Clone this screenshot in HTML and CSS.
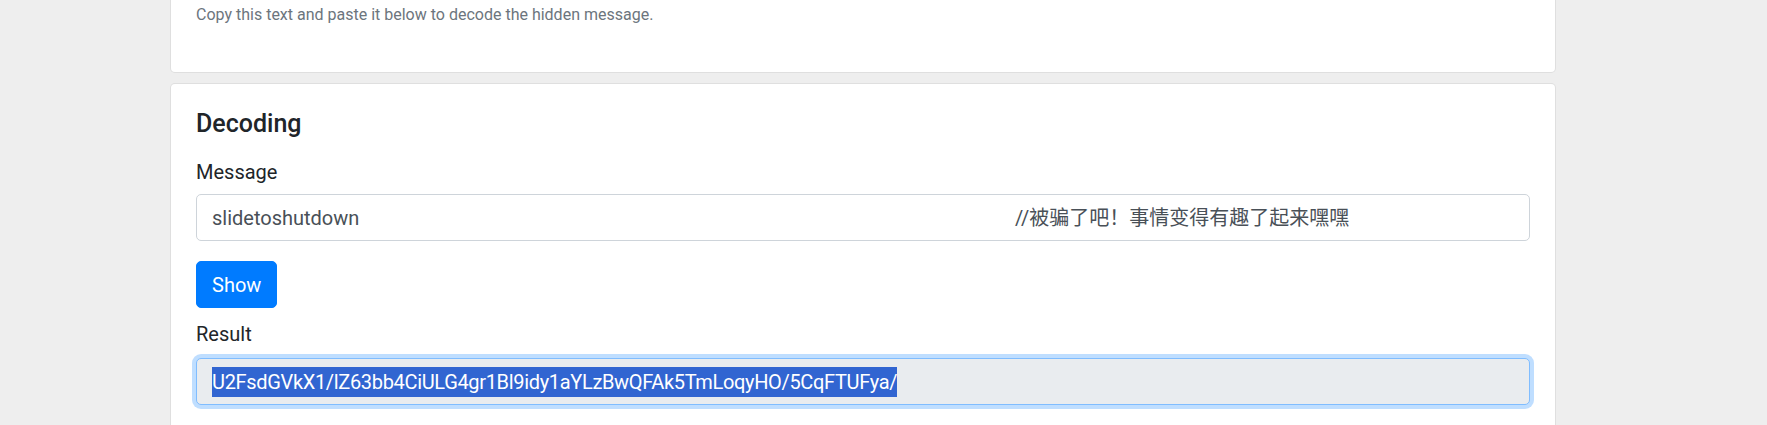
FILE: index.html
```html
<!DOCTYPE html>
<html lang="en">
<head>
<meta charset="UTF-8">
<meta name="viewport" content="width=device-width, initial-scale=1">
<title>Decoding</title>
<link rel="stylesheet" href="styles.css">
</head>
<body>
<div class="page">
    <div class="card card-encode">
        <div class="card-body">
            <div class="form-group">
                <small class="help">Copy this text and paste it below to decode the hidden message.</small>
            </div>
        </div>
    </div>
    <div class="card card-decode">
        <div class="card-body">
            <h5 class="card-title">Decoding</h5>
            <div class="form-group">
                <label class="label-message">Message</label>
                <div class="form-control"><span class="msg-word">slidetoshutdown</span><span class="msg-note">//被骗了吧！事情变得有趣了起来嘿嘿</span></div>
            </div>
            <button class="btn">Show</button>
            <div class="form-group">
                <label class="label-result">Result</label>
                <div class="form-control result"><span class="selected">U2FsdGVkX1/lZ63bb4CiULG4gr1Bl9idy1aYLzBwQFAk5TmLoqyHO/5CqFTUFya/</span></div>
            </div>
        </div>
    </div>
</div>
</body>
</html>
```

FILE: styles.css
```css
* { margin: 0; padding: 0; box-sizing: border-box; }
body {
    background: #eee;
    color: #212529;
    font-family: "Segoe UI", Roboto, "Noto Sans", "Noto Sans CJK SC", sans-serif;
    font-size: 20px;
    line-height: 30px;
}
.page {
    width: 1386px;
    margin-left: 170px;
}
.card {
    background: #fff;
    border: 1px solid rgba(0,0,0,.125);
    border-radius: 5px;
}
.card-encode { margin-top: -23px; }
.card-decode { margin-top: 10px; min-height: 400px; }
.card-body { padding: 25px; }
.form-group { margin-bottom: 20px; }
.help {
    display: block;
    font-size: 16px;
    line-height: 24px;
    color: #6c757d;
}
.card-title {
    font-size: 25px;
    font-weight: 500;
    line-height: 30px;
    margin-bottom: 18px;
}
label { display: block; }
.label-message { margin-bottom: 7px; }
.label-result { margin-bottom: 9px; }
.form-control {
    display: flex;
    height: 47px;
    padding: 7.5px 15px;
    border: 1px solid #ced4da;
    border-radius: 5px;
    color: #495057;
    background: #fff;
    white-space: nowrap;
}
.msg-word { flex: 0 0 803px; }
.msg-note { font-family: "Segoe UI", Roboto, "Noto Sans CJK SC", sans-serif; }
.btn {
    display: block;
    font-family: inherit;
    font-size: 20px;
    line-height: 30px;
    padding: 7.5px 15px;
    color: #fff;
    background: #007bff;
    border: 1px solid #007bff;
    border-radius: 5px;
    margin-bottom: 11px;
}
.result {
    background: #e9ecef;
    border-color: #80bdff;
    box-shadow: 0 0 0 4px rgba(0,123,255,.25);
}
.selected {
    background: #3165d1;
    color: #fff;
    letter-spacing: -0.33px;
}
```
